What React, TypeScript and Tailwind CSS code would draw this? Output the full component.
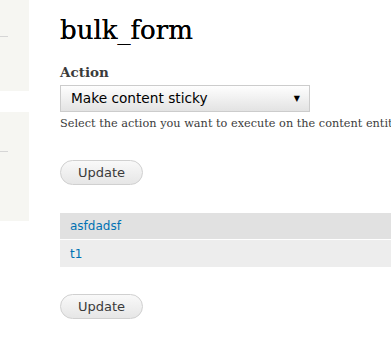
export default function App() {
  return (
    <div className="flex h-[350px] w-[391px] overflow-hidden bg-white text-[#3b3b3b]" style={{ fontFamily: '"DejaVu Serif", Georgia, serif' }}>
      <aside className="flex w-[29px] shrink-0 flex-col gap-[21px]">
        <div className="h-[91px] bg-[#f6f6f2] pt-[36px]">
          <div className="h-px w-[8px] bg-[#d6d6d6]" />
        </div>
        <div className="h-[109px] bg-[#f6f6f2] pt-[39px]">
          <div className="h-px w-[8px] bg-[#d6d6d6]" />
        </div>
      </aside>
      <main className="ml-[31px] flex min-w-0 flex-1 flex-col">
        <h1 className="mt-[12px] whitespace-nowrap text-[26px] leading-[36px] text-black [text-shadow:0_0_0.4px_#000]">bulk_form</h1>
        <label className="mt-[15px] text-[13.5px] font-bold leading-[18px] text-[#3b3b3b]">Action</label>
        <div
          className="mt-[4px] flex h-[27px] w-[250px] items-center justify-between border border-[#ccc] bg-gradient-to-b from-[#fefefe] to-[#e3e3e3] pl-[10px] pr-[9px] text-[13.7px] text-black"
          style={{ fontFamily: '"DejaVu Sans", sans-serif' }}
        >
          <span>Make content sticky</span>
          <span className="text-[8px]">▼</span>
        </div>
        <p className="mt-[4px] whitespace-nowrap text-[11.3px] leading-[16px] text-[#3b3b3b]">
          Select the action you want to execute on the content entities.
        </p>
        <button
          className="mt-[28px] h-[25px] w-[83px] rounded-full border border-[#d0d0d0] bg-gradient-to-b from-[#f9f9f9] to-[#e6e6e6] text-[13px] text-[#3a3a3a]"
          style={{ fontFamily: '"DejaVu Sans", sans-serif' }}
        >
          Update
        </button>
        <div className="mt-[28px] flex w-[400px] flex-col" style={{ fontFamily: '"DejaVu Sans", sans-serif' }}>
          <div className="flex h-[27px] items-center border-b border-white bg-[#e1e1e1] px-[10px] text-[12px] text-[#0071b3]">asfdadsf</div>
          <div className="flex h-[27px] items-center bg-[#ededed] px-[10px] text-[12px] text-[#0071b3]">t1</div>
        </div>
        <button
          className="mt-[27px] h-[25px] w-[83px] rounded-full border border-[#d0d0d0] bg-gradient-to-b from-[#f9f9f9] to-[#e6e6e6] text-[13px] text-[#3a3a3a]"
          style={{ fontFamily: '"DejaVu Sans", sans-serif' }}
        >
          Update
        </button>
      </main>
    </div>
  );
}
